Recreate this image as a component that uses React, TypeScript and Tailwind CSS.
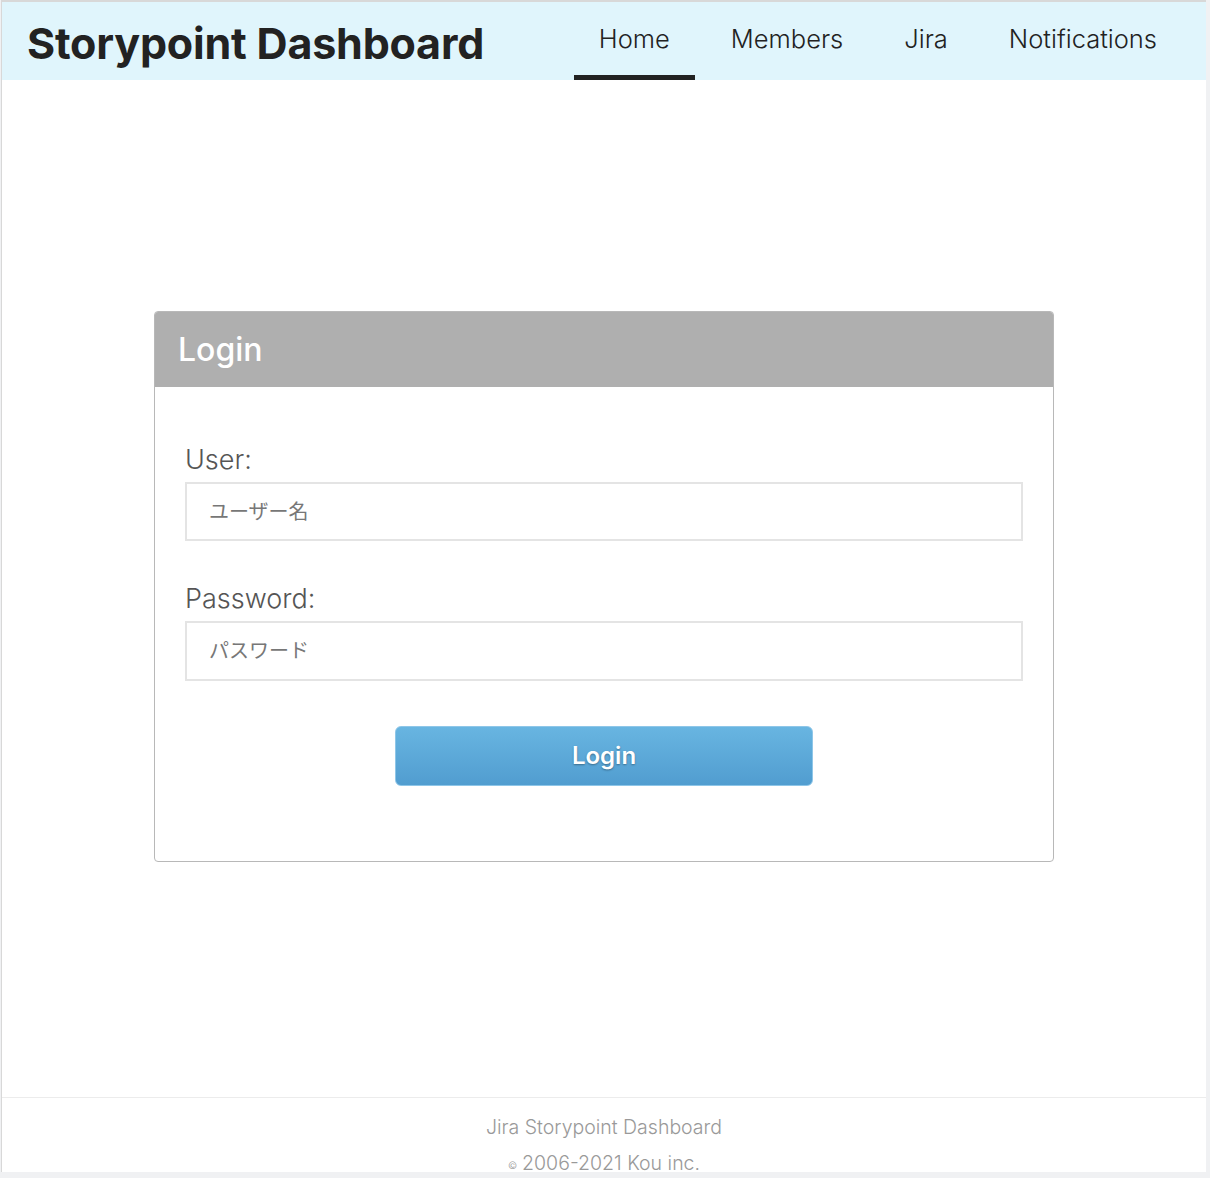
import { useState } from 'react';

const navItems = ['Home', 'Members', 'Jira', 'Notifications'];

export default function App() {
  const [user, setUser] = useState('');
  const [password, setPassword] = useState('');
  const active = 'Home';

  return (
    <div
      className="w-[1210px] h-[1178px] bg-[#f0f1f3] overflow-hidden"
      style={{ fontFamily: 'Inter, "Noto Sans CJK JP", sans-serif' }}
    >
      <div className="ml-[1px] w-[1205px] h-[1172px] border-l border-t-2 border-[#d8d8d8] bg-white flex flex-col">
        {/* Header */}
        <header className="h-[78px] bg-[#e0f5fc] flex items-stretch justify-between">
          <h1 className="pl-[25px] pt-[14px] text-[43px] font-bold text-[#222] tracking-[-0.2px] leading-[54px]">
            Storypoint Dashboard
          </h1>
          <nav className="flex items-stretch pr-[24px]">
            {navItems.map((item) => (
              <a
                key={item}
                href="#"
                className={`ml-[11px] px-[25px] pt-[19px] text-[25.5px] font-light text-[#222] leading-[36px] border-b-[5px] ${
                  item === active ? 'border-[#222]' : 'border-transparent'
                }`}
              >
                {item}
              </a>
            ))}
          </nav>
        </header>

        {/* Main */}
        <main className="flex-1 flex items-center justify-center pb-[4px]">
          <div className="w-[900px] border border-[#b8b8b8] rounded-[4px] overflow-hidden">
            <div className="h-[75px] bg-[#afafaf] px-[23px] flex items-center">
              <h2 className="text-[32px] font-medium text-white">Login</h2>
            </div>
            <div className="px-[30px] pt-[57px] pb-[75px]">
              <label className="block pb-[7px] text-[27px] font-light leading-[31px] text-[#555]">User:</label>
              <input
                value={user}
                onChange={(e) => setUser(e.target.value)}
                placeholder="ユーザー名"
                className="block w-full h-[59px] border-2 border-[#e4e4e4] px-[22px] text-[20px] text-[#444] placeholder:text-[#777] outline-none"
              />
              <label className="block mt-[42px] pb-[7px] text-[27px] font-light leading-[31px] text-[#555]">
                Password:
              </label>
              <input
                type="password"
                value={password}
                onChange={(e) => setPassword(e.target.value)}
                placeholder="パスワード"
                className="block w-full h-[60px] border-2 border-[#e4e4e4] px-[22px] text-[20px] text-[#444] placeholder:text-[#777] outline-none"
              />
              <div className="flex justify-center mt-[45px]">
                <button className="w-[418px] h-[60px] rounded-[6px] border border-[#8ec6e8] bg-gradient-to-b from-[#68b5e1] to-[#519dd0] text-white text-[24px] font-semibold [text-shadow:0_1px_2px_rgba(0,0,0,0.35)]">
                  Login
                </button>
              </div>
            </div>
          </div>
        </main>

        {/* Footer */}
        <footer className="h-[75px] border-t border-[#ececec] flex flex-col items-center text-[#999] font-light">
          <p className="mt-[17px] text-[19.5px] leading-[24px]">Jira Storypoint Dashboard</p>
          <p className="mt-[12px] text-[19.5px] leading-[24px]">
            <span className="text-[10px] align-middle mr-[5px]">©</span>2006-2021 Kou inc.
          </p>
        </footer>
      </div>
    </div>
  );
}
